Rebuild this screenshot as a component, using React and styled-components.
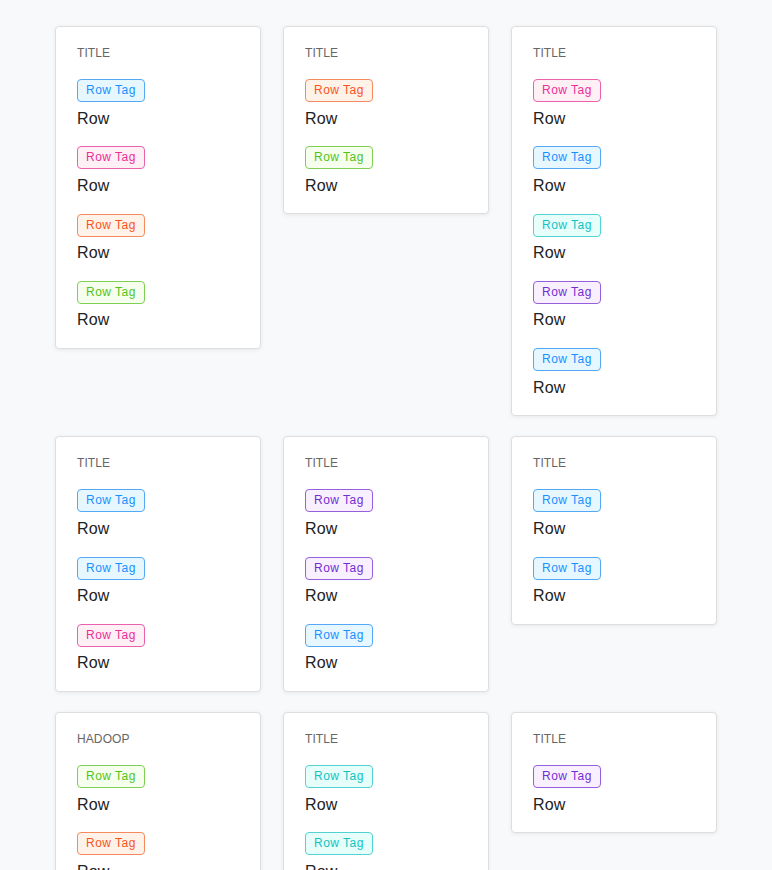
import React from "react";
import styled, { createGlobalStyle } from "styled-components";

const GlobalStyle = createGlobalStyle`
  html, body {
    margin: 0;
    padding: 0;
    background: #f8f9fb;
    font-family: "Liberation Sans", Arial, Helvetica, sans-serif;
  }
`;

const Page = styled.div`
  padding: 26px 0;
`;

const Grid = styled.div`
  display: grid;
  grid-template-columns: repeat(3, 206px);
  column-gap: 22px;
  row-gap: 20.25px;
  justify-content: center;
  align-items: start;
`;

const Card = styled.div`
  background: #fff;
  border: 1px solid #dedede;
  border-radius: 4px;
  box-shadow: 0 1px 4px rgba(0, 0, 0, 0.07);
  padding: 17px 21px 15.5px;
  box-sizing: border-box;
`;

const Title = styled.div`
  font-size: 12px;
  line-height: 18px;
  color: #666;
  letter-spacing: 0.1px;
  text-transform: uppercase;
  margin-bottom: 17px;
`;

const List = styled.div`
  display: flex;
  flex-direction: column;
  gap: 15.75px;
`;

const Item = styled.div`
  display: flex;
  flex-direction: column;
  align-items: flex-start;
`;

const palette = {
  blue: { c: "#1890ff", bg: "#e6f7ff", b: "#55a9f4" },
  magenta: { c: "#eb2f96", bg: "#fff0f6", b: "#ea62ae" },
  volcano: { c: "#fa541c", bg: "#fff2e8", b: "#f58a5e" },
  green: { c: "#52c41a", bg: "#f6ffed", b: "#80cf55" },
  cyan: { c: "#13c2c2", bg: "#e6fffb", b: "#52d2d2" },
  purple: { c: "#722ed1", bg: "#f9f0ff", b: "#965fdc" },
};

const Tag = styled.span`
  display: inline-flex;
  align-items: center;
  box-sizing: border-box;
  height: 23px;
  padding: 0 8px;
  font-size: 12px;
  line-height: 21px;
  letter-spacing: 0.5px;
  border-radius: 4px;
  border: 1px solid ${(p) => palette[p.$tone].b};
  background: ${(p) => palette[p.$tone].bg};
  color: ${(p) => palette[p.$tone].c};
  white-space: nowrap;
`;

const RowText = styled.div`
  font-size: 16px;
  line-height: 24px;
  margin-top: 4.5px;
  letter-spacing: 0.2px;
  color: #222;
`;

const cards = [
  { title: "Title", tags: ["blue", "magenta", "volcano", "green"] },
  { title: "Title", tags: ["volcano", "green"] },
  { title: "Title", tags: ["magenta", "blue", "cyan", "purple", "blue"] },
  { title: "Title", tags: ["blue", "blue", "magenta"] },
  { title: "Title", tags: ["purple", "purple", "blue"] },
  { title: "Title", tags: ["blue", "blue"] },
  { title: "Hadoop", tags: ["green", "volcano", "blue"] },
  { title: "Title", tags: ["cyan", "cyan", "green"] },
  { title: "Title", tags: ["purple"] },
];

export default function App() {
  return (
    <>
      <GlobalStyle />
      <Page>
        <Grid>
          {cards.map((card, i) => (
            <Card key={i}>
              <Title>{card.title}</Title>
              <List>
                {card.tags.map((t, j) => (
                  <Item key={j}>
                    <Tag $tone={t}>Row Tag</Tag>
                    <RowText>Row</RowText>
                  </Item>
                ))}
              </List>
            </Card>
          ))}
        </Grid>
      </Page>
    </>
  );
}
